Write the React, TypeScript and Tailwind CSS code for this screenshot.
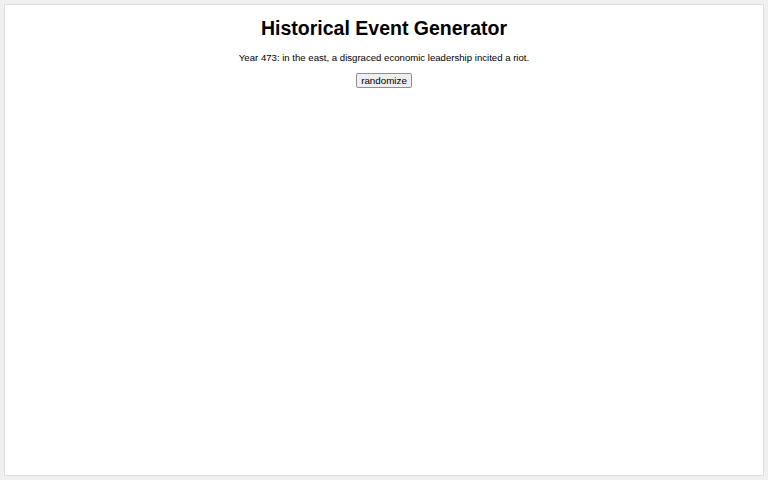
export default function App() {
  return (
    <div className="h-[480px] w-[768px] bg-[#f0f0f0] p-[4px] font-['Liberation_Sans',Arial,sans-serif] text-black">
      <div className="flex h-full flex-col items-center border border-[#dcdcdc] bg-white">
        <h1 className="mt-[10px] text-[19.5px] font-bold leading-[26px]">Historical Event Generator</h1>
        <p className="mt-[11px] text-[9.6px] leading-[12px]">
          Year 473: in the east, a disgraced economic leadership incited a riot.
        </p>
        <button
          type="button"
          className="mt-[9px] h-[15px] rounded-[2px] border border-[#8f8f8f] bg-[#efefef] px-[4px] text-[9.8px] leading-[12px]"
        >
          randomize
        </button>
      </div>
    </div>
  );
}
